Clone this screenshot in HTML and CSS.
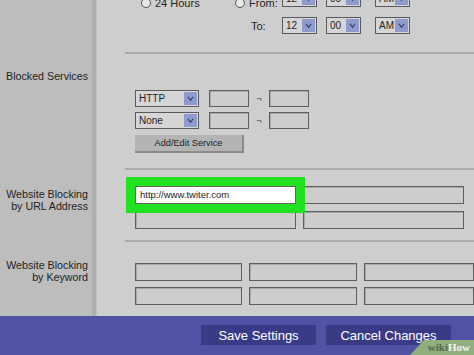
FILE: index.html
```html
<!DOCTYPE html>
<html lang="en">

<head>
    <meta charset="UTF-8">
    <meta name="viewport" content="width=device-width, initial-scale=1.0">
    <title>Access Restrictions</title>
    <link rel="stylesheet" href="styles.css">
</head>

<body>
    <div class="page">
        <div class="side"></div>
        <div class="main time">
            <div class="time-row first">
                <label class="opt"><span class="radio"></span>24 Hours</label>
                <label class="opt"><span class="radio"></span>From:</label>
                <div class="select tiny"><span>12</span><span class="arrow"><svg viewBox="0 0 10 8"><path d="M2 2 L5 6 L8 2" /></svg></span></div>
                <div class="select tiny"><span>00</span><span class="arrow"><svg viewBox="0 0 10 8"><path d="M2 2 L5 6 L8 2" /></svg></span></div>
                <div class="select tiny"><span>AM</span><span class="arrow"><svg viewBox="0 0 10 8"><path d="M2 2 L5 6 L8 2" /></svg></span></div>
            </div>
            <div class="time-row second">
                <span></span>
                <span class="to">To:</span>
                <div class="select tiny"><span>12</span><span class="arrow"><svg viewBox="0 0 10 8"><path d="M2 2 L5 6 L8 2" /></svg></span></div>
                <div class="select tiny"><span>00</span><span class="arrow"><svg viewBox="0 0 10 8"><path d="M2 2 L5 6 L8 2" /></svg></span></div>
                <div class="select tiny"><span>AM</span><span class="arrow"><svg viewBox="0 0 10 8"><path d="M2 2 L5 6 L8 2" /></svg></span></div>
            </div>
        </div>

        <div class="rule"></div>

        <div class="side label blocked-label">Blocked Services</div>
        <div class="main blocked">
            <div class="service-row">
                <div class="select wide"><span>HTTP</span><span class="arrow"><svg viewBox="0 0 10 8"><path d="M2 2 L5 6 L8 2" /></svg></span></div>
                <div class="box port"></div>
                <span class="dash">¬</span>
                <div class="box port"></div>
            </div>
            <div class="service-row">
                <div class="select wide"><span>None</span><span class="arrow"><svg viewBox="0 0 10 8"><path d="M2 2 L5 6 L8 2" /></svg></span></div>
                <div class="box port"></div>
                <span class="dash">¬</span>
                <div class="box port"></div>
            </div>
            <button type="button" class="edit-btn">Add/Edit Service</button>
        </div>

        <div class="rule"></div>

        <div class="side label url-label">Website Blocking<br>by URL Address</div>
        <div class="main url">
            <div class="url-grid">
                <div class="box url-box active">http://www.twiter.com</div>
                <div class="box url-box"></div>
                <div class="box url-box"></div>
                <div class="box url-box"></div>
            </div>
        </div>

        <div class="rule"></div>

        <div class="side label keyword-label">Website Blocking<br>by Keyword</div>
        <div class="main keyword">
            <div class="keyword-grid">
                <div class="box"></div>
                <div class="box"></div>
                <div class="box"></div>
                <div class="box"></div>
                <div class="box"></div>
                <div class="box"></div>
            </div>
        </div>
    </div>

    <div class="footer">
        <button type="button" class="footer-btn">Save Settings</button>
        <button type="button" class="footer-btn">Cancel Changes</button>
        <div class="badge"><span class="wiki">wiki</span><span class="how">How</span></div>
    </div>
</body>

</html>
```

FILE: styles.css
```css
body {
    font-family: "Liberation Sans", Arial, sans-serif;
    margin: 0;
    padding: 0;
    height: 355px;
    overflow: hidden;
    color: #1e1e1e;
}

.page {
    display: grid;
    grid-template-columns: 97px 1fr;
    height: 316px;
    overflow: hidden;
    background: linear-gradient(to right, #bdbdbd 0, #bdbdbd 91px, #aaaaaa 94px, #b4b4b4 96px, #cecece 97px, #cecece 100%);
}

.label {
    font-size: 10.7px;
    line-height: 12px;
    text-align: right;
    padding-right: 9px;
}

.blocked-label {
    padding-top: 16px;
}

.url-label {
    padding-top: 18px;
}

.keyword-label {
    padding-top: 17px;
}

.rule {
    grid-column: 2;
    height: 2px;
    margin-left: 28px;
    background-color: #acacac;
}

/* time of day */
.time {
    height: 52px;
    font-size: 11px;
}

.time-row {
    display: grid;
    grid-template-columns: 94px 47px 44px 49px 36px;
    align-items: center;
    padding-left: 44px;
    height: 17px;
}

.time-row.first {
    margin-top: -10px;
}

.time-row.second {
    margin-top: 10px;
}

.opt {
    display: flex;
    align-items: center;
    gap: 4px;
    position: relative;
    top: 4px;
}

.radio {
    width: 8px;
    height: 8px;
    border: 1px solid #555;
    border-radius: 50%;
    background-color: #e8e8e8;
}

.to {
    padding-left: 16px;
}

/* selects */
.select {
    box-sizing: border-box;
    display: flex;
    align-items: center;
    justify-content: space-between;
    height: 17px;
    border: 1px solid #5a5a5a;
    background-color: #d6d6d6;
    font-size: 10px;
    padding-left: 3px;
}

.select.tiny {
    width: 35px;
}

.select.wide {
    width: 64px;
}

.arrow {
    display: flex;
    align-items: center;
    justify-content: center;
    width: 13px;
    height: 13px;
    margin-right: 1px;
    background-color: #8d9bcf;
}

.arrow svg {
    width: 9px;
    height: 7px;
}

.arrow path {
    fill: none;
    stroke: #2c3460;
    stroke-width: 1.2;
}

/* blocked services */
.blocked {
    padding: 36px 0 15px 38px;
}

.service-row {
    display: flex;
    align-items: center;
    height: 17px;
    margin-bottom: 5px;
}

.box {
    box-sizing: border-box;
    height: 18px;
    border: 1px solid #5e5e5e;
    box-shadow: inset 1px 1px 0 #a8a8a8;
    background-color: #cdcdcd;
}

.box.port {
    width: 40px;
    height: 17px;
    margin-left: 10px;
}

.dash {
    width: 20px;
    text-align: center;
    font-size: 9px;
    color: #333;
    margin-right: -10px;
}

.edit-btn {
    display: block;
    width: 109px;
    height: 18px;
    margin-top: 6px;
    padding: 0;
    border: none;
    border-right: 2px solid #8a8a8a;
    border-bottom: 2px solid #8a8a8a;
    background-color: #b4b4b4;
    font-family: "Liberation Sans", Arial, sans-serif;
    font-size: 9.2px;
    color: #222;
}

/* url blocking */
.url {
    padding: 16px 0 11px 38px;
}

.url-grid {
    display: grid;
    grid-template-columns: 161px 161px;
    column-gap: 7px;
    row-gap: 7px;
}

.url-box {
    font-size: 9.5px;
    line-height: 16px;
    padding-left: 4px;
}

.url-box.active {
    position: relative;
    z-index: 1;
    background-color: #fff;
    border-color: #666;
    box-shadow: none;
    outline: 9px solid #22e022;
}

/* keyword blocking */
.keyword {
    padding: 21px 0 11px 38px;
}

.keyword-grid {
    display: grid;
    grid-template-columns: 107px 108px 110px;
    column-gap: 7px;
    row-gap: 6px;
}

/* footer */
.footer {
    position: relative;
    display: flex;
    justify-content: flex-end;
    gap: 10px;
    height: 39px;
    box-sizing: border-box;
    padding: 9px 23px 0 0;
    background-color: #5152a4;
}

.footer-btn {
    height: 20px;
    padding: 0;
    border: none;
    background-color: #3a3b87;
    color: #fff;
    font-family: "Liberation Sans", Arial, sans-serif;
    font-size: 13px;
}

.footer-btn:first-child {
    width: 115px;
}

.footer-btn:nth-child(2) {
    width: 125px;
}

.badge {
    position: absolute;
    right: 0;
    bottom: 0;
    width: 64px;
    height: 15px;
    background-color: #8fb07c;
    clip-path: polygon(14px 0, 100% 0, 100% 100%, 0 100%);
    font-family: "Liberation Serif", serif;
    font-weight: bold;
    font-size: 11px;
    line-height: 15px;
    text-align: right;
    padding-right: 4px;
    box-sizing: border-box;
}

.wiki {
    color: #55664a;
}

.how {
    color: #f4f4f4;
}
```
